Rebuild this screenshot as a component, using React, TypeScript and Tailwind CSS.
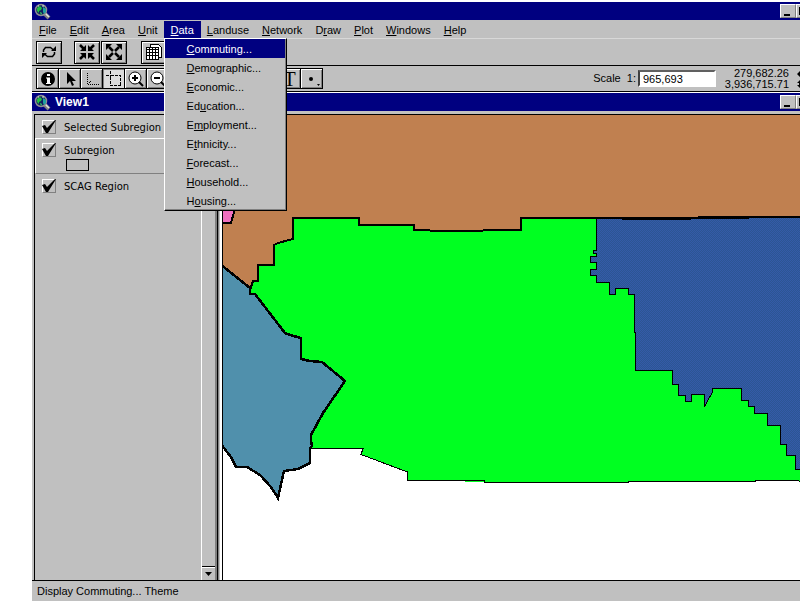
import type { ReactNode } from "react";

const raised =
  "border border-t-white border-l-white border-b-[#808080] border-r-[#808080] bg-[#c0c0c0]";

function Hot({ text, at }: { text: string; at: number }) {
  return (
    <span>
      {text.slice(0, at)}
      <span className="underline underline-offset-1">{text[at]}</span>
      {text.slice(at + 1)}
    </span>
  );
}

function GlobeIcon() {
  return (
    <svg width="17" height="17" viewBox="0 0 17 17" aria-hidden="true" className="shrink-0">
      <path d="M10 10l5 5" stroke="#808080" strokeWidth="4" />
      <path d="M10 9l5 5" stroke="#e0e0e0" strokeWidth="1.5" />
      <circle cx="7" cy="7" r="5.5" fill="#102060" stroke="#909090" strokeWidth="1.5" />
      <path d="M3 5l3-2 2 2-1 2-2 1v2l-2-2z" fill="#20c040" />
      <path d="M9 4l3 2v3l-2 2-1-2z" fill="#20a0a0" />
      <path d="M6 9l2 1-1 2z" fill="#40e060" />
      <path d="M8 3h2M4 3h1" stroke="#e0ffe0" />
    </svg>
  );
}

function WindowButtons() {
  return (
    <div className="-mr-3 flex shrink-0">
      <button aria-label="Minimize" className={`flex h-3.5 w-4 items-end pb-px pl-[3px] ${raised}`}>
        <span className="block h-0.5 w-1.5 bg-black" />
      </button>
      <button aria-label="Maximize" className={`flex h-3.5 w-4 items-center justify-center ${raised}`}>
        <span className="block h-2 w-2.5 border border-t-2 border-black" />
      </button>
    </div>
  );
}

function TitleBar({ title }: { title?: string }) {
  return (
    <header className="flex h-[18px] shrink-0 items-center bg-[#000080] pl-0.5 text-white">
      <GlobeIcon />
      <h1 className="flex-1 pl-1 text-[12px] leading-4 font-bold">{title}</h1>
      <WindowButtons />
    </header>
  );
}

const menus: [string, number][] = [
  ["File", 0],
  ["Edit", 0],
  ["Area", 0],
  ["Unit", 0],
  ["Data", 0],
  ["Landuse", 0],
  ["Network", 0],
  ["Draw", 1],
  ["Plot", 0],
  ["Windows", 0],
  ["Help", 0],
];

const dataItems: [string, number][] = [
  ["Commuting...", 0],
  ["Demographic...", 0],
  ["Economic...", 0],
  ["Education...", 2],
  ["Employment...", 1],
  ["Ethnicity...", 1],
  ["Forecast...", 0],
  ["Household...", 0],
  ["Housing...", 1],
];

function MenuBar() {
  return (
    <nav className="flex h-[18px] shrink-0 border-b border-[#d8d8d8]">
      {menus.map(([name, at]) => (
        <div key={name} className="relative -mr-px">
          <button
            className={`h-[17px] px-[7px] leading-4 ${name === "Data" ? "bg-[#000080] text-white" : ""}`}
          >
            <Hot text={name} at={at} />
          </button>
          {name === "Data" && (
            <ul
              role="menu"
              className="absolute top-full left-0 z-10 w-[123px] border border-t-white border-r-black border-b-black border-l-white bg-[#c0c0c0] shadow-[inset_-1px_-1px_0_#808080]"
            >
              {dataItems.map(([label, hot], i) => (
                <li key={label} role="none" className="pr-px">
                  <button
                    role="menuitem"
                    className={`block h-[19px] w-full pl-[22px] text-left leading-5 ${i === 0 ? "bg-[#000080] text-white" : ""}`}
                  >
                    <Hot text={label} at={hot} />
                  </button>
                </li>
              ))}
            </ul>
          )}
        </div>
      ))}
    </nav>
  );
}

function Tool({ label, wide, pressed, children }: { label: string; wide?: boolean; pressed?: boolean; children?: ReactNode }) {
  return (
    <button
      aria-label={label}
      className={`flex shrink-0 items-center justify-center border border-black ${wide ? "h-[23px] w-[26px]" : "-mr-px h-[21px] w-[23px]"} ${
        pressed
          ? "bg-[#dcdcdc] shadow-[inset_1px_1px_0_#808080]"
          : "bg-[#c0c0c0] shadow-[inset_1px_1px_0_#fff,inset_-1px_-1px_0_#808080]"
      }`}
    >
      {children}
    </button>
  );
}

function Glyph({ children }: { children: ReactNode }) {
  return (
    <svg width="18" height="18" viewBox="0 0 18 18" fill="none" stroke="#000" aria-hidden="true" className="shrink-0">
      {children}
    </svg>
  );
}

function ButtonBar() {
  return (
    <div className="flex h-[27px] shrink-0 items-center border-b border-black pl-1">
      <Tool label="Refresh" wide>
        <Glyph>
          <path d="M3.500 9V7l2-2.500h5l3 2.500M14.500 9v2l-2 2.500h-5l-3-2.500" strokeWidth="1.5" />
          <path d="M11 8h5V3zM7 10H2v5z" fill="#000" stroke="none" />
        </Glyph>
      </Tool>
      <div className="ml-3 flex gap-px">
        <Tool label="Zoom in" wide>
          <Glyph>
            <path d="M2 2l4 4M16 2l-4 4M2 16l4-4M16 16l-4-4" strokeWidth="2.5" />
            <path d="M8 2v6H2zM10 2v6h6zM8 16v-6H2zM10 16v-6h6z" fill="#000" stroke="none" />
          </Glyph>
        </Tool>
        <Tool label="Zoom out" wide>
          <Glyph>
            <path d="M4 4l4 4M14 4l-4 4M4 14l4-4M14 14l-4-4" strokeWidth="2.5" />
            <path d="M1 1h6L1 7zM17 1h-6l6 6zM1 17h6l-6-6zM17 17h-6l6-6z" fill="#000" stroke="none" />
          </Glyph>
        </Tool>
      </div>
      <div className="ml-3.5">
        <Tool label="Table" wide>
          <Glyph>
            <g shapeRendering="crispEdges">
              <path d="M5.500 1.500h8l3 3v10h-11z" fill="#fff" />
              <path d="M1.500 4.500h12v12h-12z" fill="#fff" />
              <path d="M1 6.500h12M1 9.500h12M1 12.500h12M4.500 5v11M7.500 5v11M10.500 5v11" />
            </g>
          </Glyph>
        </Tool>
      </div>
    </div>
  );
}

function ToolBar() {
  return (
    <div className="flex h-[26px] shrink-0 items-center border-b border-black pl-1">
      <Tool label="Identify">
        <Glyph>
          <circle cx="9" cy="9" r="7" fill="#000" stroke="none" />
          <path d="M8 4h3v2H8zM7 7.500h4V13h1v1H7v-1h1V8.500H7z" fill="#fff" stroke="none" />
        </Glyph>
      </Tool>
      <Tool label="Pointer">
        <Glyph>
          <path d="M6 2v12l3-3 2 5 2-1-2-4h4z" fill="#000" stroke="none" />
        </Glyph>
      </Tool>
      <Tool label="Vertex edit">
        <Glyph>
          <path d="M4.500 3v11M4.500 14.500h11M4.500 14.500l5-5" strokeDasharray="1 1" shapeRendering="crispEdges" />
        </Glyph>
      </Tool>
      <Tool label="Select feature" pressed>
        <Glyph>
          <g shapeRendering="crispEdges">
            <path d="M5.500 5.500h10v10h-10z" strokeDasharray="3 1" />
            <path d="M5.500 1v8M1 5.500h8" strokeDasharray="3 1" />
          </g>
        </Glyph>
      </Tool>
      <Tool label="Magnify">
        <Glyph>
          <circle cx="8" cy="8" r="6" fill="#fff" />
          <path d="M5 8h6M8 5v6" strokeWidth="2" />
          <path d="M12 12l4 4" strokeWidth="2" />
        </Glyph>
      </Tool>
      <Tool label="Reduce">
        <Glyph>
          <circle cx="8" cy="8" r="6" fill="#fff" />
          <path d="M5 8h6" strokeWidth="2" />
          <path d="M12 12l4 4" strokeWidth="2" />
        </Glyph>
      </Tool>
      <Tool label="Pan" />
      <Tool label="Measure" />
      <Tool label="Hot link" />
      <Tool label="Area of interest" />
      <Tool label="Label" />
      <Tool label="Text">
        <span className="font-['Liberation_Serif',serif] text-[20px] leading-5">T</span>
      </Tool>
      <Tool label="Draw point">
        <Glyph>
          <circle cx="8" cy="9" r="2" fill="#000" stroke="none" />
          <path d="M14 14h3l-1.500 2z" fill="#000" stroke="none" />
        </Glyph>
      </Tool>
      <div className="-mr-3 ml-auto flex shrink-0 items-center">
        <label htmlFor="scale" className="pr-0.5 whitespace-pre">
          Scale  1:
        </label>
        <input
          id="scale"
          defaultValue="965,693"
          className="h-[17px] w-[78px] border-2 border-t-[#606060] border-r-white border-b-white border-l-[#404040] bg-white pl-[3px] leading-3 outline-none"
        />
        <div className="w-[73px] text-right leading-[11px]">
          <p>279,682.26</p>
          <p>3,936,715.71</p>
        </div>
        <svg width="15" height="20" viewBox="0 0 15 20" aria-hidden="true" className="ml-2 shrink-0">
          <path d="M0 5l3-3v2h7V2l4 3-4 3V6H3v2zM3 11l3 3H4v2h2l-3 3-3-3h2v-2H0z" />
        </svg>
      </div>
    </div>
  );
}

function Theme({ name, active, swatch }: { name: string; active?: boolean; swatch?: boolean }) {
  return (
    <li
      className={
        active
          ? "border border-t-white border-r-[#808080] border-b-[#808080] border-l-white pt-1 pb-0.5 pl-1.5"
          : "pt-[5px] pb-1 pl-[7px]"
      }
    >
      <label className="flex h-3.5 items-center gap-2 font-['DejaVu_Sans',sans-serif] text-[10px] whitespace-nowrap">
        <span className="relative block h-3.5 w-3.5 shrink-0">
          <input
            type="checkbox"
            defaultChecked
            className="block h-3.5 w-3.5 appearance-none border border-t-white border-r-[#808080] border-b-[#808080] border-l-white bg-[#c0c0c0]"
          />
          <svg width="16" height="14" viewBox="0 0 16 14" aria-hidden="true" className="pointer-events-none absolute top-0 left-0">
            <path d="M0 6l3-1 2 3 8-8h1L6 13H4z" />
          </svg>
        </span>
        {name}
      </label>
      {swatch && <div className="mt-0.5 ml-6 h-3 w-[23px] border border-black" />}
    </li>
  );
}

function Legend() {
  return (
    <aside className="flex w-[184px] shrink-0 border-t border-r border-l border-black">
      <ul className="min-w-0 flex-1 overflow-hidden">
        <Theme name="Selected Subregion" />
        <Theme name="Subregion" active swatch />
        <Theme name="SCAG Region" />
      </ul>
      <div className="flex w-4 flex-col border-r-2 border-l border-r-[#808080] border-l-white">
        <div className="flex-1" />
        <button aria-label="Scroll down" className="flex h-[14px] items-center justify-center border-t border-black shadow-[inset_0_1px_0_#fff]">
          <svg width="7" height="4" viewBox="0 0 7 4" aria-hidden="true">
            <path d="M0 0h7L3.500 4z" />
          </svg>
        </button>
      </div>
    </aside>
  );
}

function RegionMap() {
  return (
    <div className="flex min-w-0 flex-1 border-l border-l-[#808080] pl-px">
      <div className="w-0.5 bg-white" />
      <div className="relative min-w-0 flex-1 border-t border-l border-black bg-white">
        <svg
          viewBox="223 115 577 465"
          preserveAspectRatio="xMinYMin slice"
          role="img"
          aria-label="Subregion map"
          className="absolute inset-0 h-full w-full"
          shapeRendering="crispEdges"
        >
          <defs>
            <pattern id="dither" width="2" height="2" patternUnits="userSpaceOnUse">
              <rect width="2" height="2" fill="#2c5593" />
              <path d="M0 0h1v1H0zM1 1h1v1H1z" fill="#345ba8" />
            </pattern>
          </defs>
          <path d="M223 115H802V240H300V294H223z" fill="#c08050" />
          <path d="M220 205H236L231 223H220z" fill="#f070c0" stroke="#000" strokeWidth="2" />
          <path
            d="M250 294V288L252 281H258V265H274V245L278 243L293 239V218H359V225H414V230L445 231L521 230V218H802V481H755L628 482H484L407 480V472L361 454L363 448H310L300 400z"
            fill="#00ff21"
          />
          <path
            d="M596.500 218V250H593.500V253H596.500V256.500H590.500V262.500H596.500V269.500H590.500V275.500H596.500V282.500H609.500V294.500H615.500V288.500H628.500V294.500H634.500V332.500H635.500V370.500H672.500V384.500H678.500V395.500H685.500V401.500H691.500V394.500H704.500V407L707 402L712.500 392V388.500H741.500V400.500H748.500V406.500H754.500V413.500H767.500V425.500H780.500V444.500H786.500V455.500H795.500V469.500H802V216z"
            fill="url(#dither)"
            stroke="#000"
          />
          <path
            d="M310 448.500H363L361 454.500L407.500 472V480.500H484V482.500H628V481.500H755V480.500H798L802 482"
            fill="none"
            stroke="#000"
          />
          <path
            d="M220 264L250 288V294L255 294L285 333L290 335L301 338V359L310 361L322 362L345 381L323 413L311 435V440L312 446L310 448V463L298 469L284 471L278 498L271 487L260 475L247 467H236L231 457L220 443z"
            fill="#5090ac"
            stroke="#000"
            strokeWidth="2.500"
          />
          <path
            d="M250 290L253 281H258V265H274V245L278 243L293 239V218H359V225H414V230L445 231L521 230V218H621L624 219H634V219H690V218H748V217H802"
            fill="none"
            stroke="#000"
            strokeWidth="2"
          />
        </svg>
      </div>
    </div>
  );
}

export default function App() {
  return (
    <div className="h-screen overflow-hidden bg-white pt-0.5 pl-8">
      <div className="flex h-full flex-col overflow-hidden bg-[#c0c0c0] font-['Liberation_Sans',Arial,sans-serif] text-[11px] text-black">
        <TitleBar />
        <div className="h-px shrink-0" />
        <MenuBar />
        <ButtonBar />
        <ToolBar />
        <div className="h-px shrink-0 bg-white" />
        <TitleBar title="View1" />
        <main className="flex min-h-0 flex-1 pt-[3px] pl-0.5">
          <Legend />
          <RegionMap />
        </main>
        <footer className="flex h-[21px] shrink-0 items-center border-t border-black pt-px pl-[5px]">
          Display Commuting... Theme
        </footer>
      </div>
    </div>
  );
}
